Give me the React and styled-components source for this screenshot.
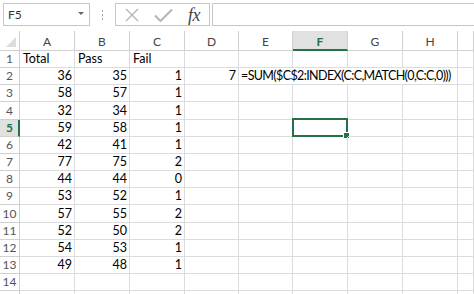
import React from 'react';
import styled, { createGlobalStyle } from 'styled-components';

const GREEN = '#217346';
const GRID = '#dadcdd';
const HEAD_LINE = '#d0d0d0';

const Global = createGlobalStyle`
  html, body { margin: 0; padding: 0; background: #fff; }
  body { width: 474px; height: 294px; overflow: hidden; font-family: Lato, "Liberation Sans", sans-serif; }
`;

const Page = styled.div`
  width: 474px;
  height: 294px;
  overflow: hidden;
  background: #fff;
  display: flex;
  flex-direction: column;
`;

const FormulaBar = styled.div`
  height: 31px;
  flex: none;
  box-sizing: border-box;
  padding: 3px 0 0 3px;
  display: flex;
  align-items: flex-start;
`;

const NameBox = styled.div`
  width: 87px;
  height: 23px;
  box-sizing: border-box;
  border: 1px solid #c6c6c6;
  display: flex;
  align-items: center;
  justify-content: space-between;
  padding: 0 5px 0 4px;
  font-size: 12px;
  color: #333;
`;

const Arrow = styled.span`
  width: 0;
  height: 0;
  border-left: 3px solid transparent;
  border-right: 3px solid transparent;
  border-top: 3px solid #666;
  margin-top: -3px;
`;

const Grip = styled.div`
  width: 25px;
  height: 23px;
  display: flex;
  flex-direction: column;
  align-items: center;
  justify-content: center;
  gap: 2px;
`;

const Dot = styled.span`
  width: 1px;
  height: 2px;
  background: #a0a0a0;
`;

const FxBox = styled.div`
  width: 95px;
  height: 23px;
  box-sizing: border-box;
  border: 1px solid #c6c6c6;
  display: flex;
  align-items: center;
  padding-left: 9px;
`;

const IconSlot = styled.span`
  display: flex;
  align-items: center;
  justify-content: center;
  width: ${p => p.$w}px;
  margin-right: ${p => p.$gap || 0}px;
`;

const FxText = styled.span`
  font-family: "Liberation Serif", "DejaVu Serif", serif;
  font-style: italic;
  font-size: 18px;
  color: #444;
  line-height: 1;
  letter-spacing: -0.5px;
`;

const FormulaInput = styled.div`
  flex: 1;
  height: 23px;
  margin-left: 2px;
  box-sizing: border-box;
  border: 1px solid #c6c6c6;
  border-right: none;
`;

const Sheet = styled.div`
  display: grid;
  grid-template-columns: 20px 55px 55px 55px 54px 54px 55px 55px 55px 1fr;
  grid-template-rows: 20px 17px 17px 17px 18px 17px 17px 17px 17px 17px 18px 17px 17px 17px 17px 17px;
  font-size: 12.5px;
  color: #000;
`;

const Corner = styled.div`
  box-sizing: border-box;
  border-right: 1px solid ${HEAD_LINE};
  border-bottom: 1px solid ${HEAD_LINE};
  position: relative;
  &::after {
    content: '';
    position: absolute;
    right: 3px;
    bottom: 3px;
    width: 0;
    height: 0;
    border-left: 10px solid transparent;
    border-bottom: 10px solid #dcdcdc;
  }
`;

const ColHead = styled.div`
  box-sizing: border-box;
  border-right: 1px solid ${HEAD_LINE};
  border-bottom: ${p => (p.$active ? `2px solid ${GREEN}` : `1px solid ${HEAD_LINE}`)};
  background: ${p => (p.$active ? '#e1e1e1' : '#fff')};
  color: ${p => (p.$active ? GREEN : '#444')};
  font-weight: ${p => (p.$active ? 700 : 400)};
  font-size: 12px;
  display: flex;
  align-items: center;
  justify-content: center;
  padding-top: ${p => (p.$active ? 2 : 1)}px;
`;

const RowHead = styled.div`
  box-sizing: border-box;
  border-right: ${p => (p.$active ? `2px solid ${GREEN}` : `1px solid ${HEAD_LINE}`)};
  border-bottom: 1px solid ${HEAD_LINE};
  background: ${p => (p.$active ? '#e1e1e1' : '#fff')};
  color: ${p => (p.$active ? GREEN : '#555')};
  font-weight: ${p => (p.$active ? 700 : 400)};
  font-size: 12px;
  display: flex;
  align-items: flex-end;
  justify-content: center;
  padding: 0 0 1px ${p => (p.$active ? 1 : 0)}px;
  line-height: 14px;
`;

const Cell = styled.div`
  box-sizing: border-box;
  border-right: 1px solid ${GRID};
  border-bottom: 1px solid ${GRID};
  grid-column: span ${p => p.$span || 1};
  display: flex;
  align-items: flex-end;
  justify-content: ${p => (p.$right ? 'flex-end' : 'flex-start')};
  padding: 0 2px 1px ${p => (p.$tight ? 2 : 3)}px;
  line-height: 14px;
  white-space: nowrap;
  position: relative;
  letter-spacing: ${p => (p.$tight ? '-0.62px' : 'normal')};
`;

const Selection = styled.div`
  position: absolute;
  left: -1px;
  top: -2px;
  right: -1px;
  bottom: -1px;
  border: 2px solid ${GREEN};
  pointer-events: none;
`;

const Handle = styled.span`
  position: absolute;
  right: -4px;
  bottom: -4px;
  width: 5px;
  height: 5px;
  background: ${GREEN};
  border: 1px solid #fff;
`;

const COLS = ['A', 'B', 'C', 'D', 'E', 'F', 'G', 'H', ''];
const DATA = [
  [36, 35, 1], [58, 57, 1], [32, 34, 1], [59, 58, 1], [42, 41, 1], [77, 75, 2],
  [44, 44, 0], [53, 52, 1], [57, 55, 2], [52, 50, 2], [54, 53, 1], [49, 48, 1],
];
const FORMULA = '=SUM($C$2:INDEX(C:C,MATCH(0,C:C,0)))';

function CrossIcon() {
  return (
    <svg width="14" height="14" viewBox="0 0 14 14">
      <path d="M1 1 L13 13 M13 1 L1 13" stroke="#b4b4b4" strokeWidth="1.3" fill="none" />
    </svg>
  );
}

function CheckIcon() {
  return (
    <svg width="19" height="14" viewBox="0 0 19 14">
      <path d="M1 7.5 L6.5 13 L18 1.5" stroke="#b4b4b4" strokeWidth="2" fill="none" />
    </svg>
  );
}

function renderRow(r) {
  const cells = [];
  const active = r === 5;
  cells.push(<RowHead key="h" $active={active}>{r <= 14 ? r : ''}</RowHead>);
  if (r === 1) {
    cells.push(<Cell key="a">Total</Cell>, <Cell key="b">Pass</Cell>, <Cell key="c">Fail</Cell>);
    for (let i = 3; i < 9; i++) cells.push(<Cell key={i} />);
  } else if (r >= 2 && r <= 13) {
    const d = DATA[r - 2];
    d.forEach((v, i) => cells.push(<Cell key={i} $right>{v}</Cell>));
    if (r === 2) {
      cells.push(<Cell key="d" $right>7</Cell>);
      cells.push(<Cell key="e" $span={4} $tight>{FORMULA}</Cell>);
      cells.push(<Cell key="i" />);
    } else {
      for (let i = 3; i < 9; i++) {
        cells.push(
          <Cell key={i}>
            {active && i === 5 ? (
              <Selection>
                <Handle />
              </Selection>
            ) : null}
          </Cell>
        );
      }
    }
  } else {
    for (let i = 0; i < 9; i++) cells.push(<Cell key={i} />);
  }
  return cells;
}

export default function App() {
  const rows = [];
  for (let r = 1; r <= 15; r++) rows.push(...renderRow(r));
  return (
    <Page>
      <Global />
      <FormulaBar>
        <NameBox>
          <span>F5</span>
          <Arrow />
        </NameBox>
        <Grip>
          <Dot />
          <Dot />
          <Dot />
        </Grip>
        <FxBox>
          <IconSlot $w={14} $gap={15}><CrossIcon /></IconSlot>
          <IconSlot $w={19} $gap={12}><CheckIcon /></IconSlot>
          <IconSlot $w={18}><FxText>fx</FxText></IconSlot>
        </FxBox>
        <FormulaInput />
      </FormulaBar>
      <Sheet>
        <Corner />
        {COLS.map((c, i) => (
          <ColHead key={i} $active={c === 'F'}>{c}</ColHead>
        ))}
        {rows}
      </Sheet>
    </Page>
  );
}
